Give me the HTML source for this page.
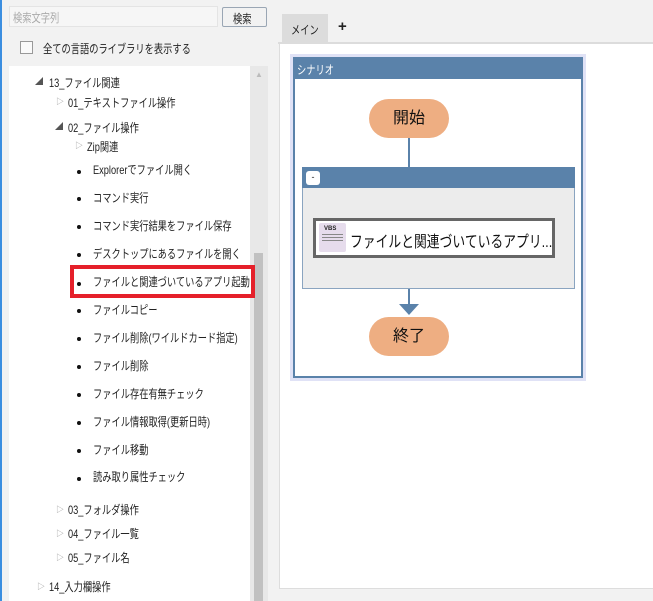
<!DOCTYPE html>
<html><head><meta charset="utf-8"><style>
*{margin:0;padding:0;box-sizing:border-box}
body{width:653px;height:601px;overflow:hidden;background:#f2f2f2;font-family:"Liberation Sans","Noto Sans CJK JP",sans-serif;font-size:12px;color:#222;position:relative}
.a{position:absolute;white-space:nowrap}
.t{transform:scaleX(.77);transform-origin:0 50%}
.tri{font-size:8px;color:#555}
.dot{position:absolute;width:4px;height:4px;border-radius:2px;background:#111}
.pill{position:absolute;width:80px;height:39px;border-radius:20px;background:#eeae82;font-size:16px;text-align:center;line-height:39px;color:#111}
</style></head><body>
<div class="a" style="left:0;top:0;width:2px;height:601px;background:#3b8ee0"></div>
<div class="a" style="top:6px;left:9px;width:209px;height:21px;background:#f6f6f6;border:1px solid #e4e4e4;color:#aaa;padding:2px 3px"><span class="a t" style="left:3px;top:2px">検索文字列</span></div>
<div class="a" style="left:222px;top:7px;width:45px;height:20px;background:#f2f2f2;border:1px solid #9aa6b4;border-radius:2px"><span class="a t" style="left:10px;top:2px">検索</span></div>
<div class="a" style="left:20px;top:41px;width:13px;height:13px;border:1px solid #999;background:#fafafa"></div>
<div class="a t" style="left:43px;top:40px">全ての言語のライブラリを表示する</div>
<div class="a" style="left:9px;top:66px;width:241px;height:535px;background:#fff"></div>

<div class="a tri" style="left:35px;top:76px">◢</div><div class="a t" style="left:49px;top:74px">13_ファイル関連</div>
<div class="a tri" style="left:56px;top:96px;color:#999">▷</div><div class="a t" style="left:68px;top:94px">01_テキストファイル操作</div>
<div class="a tri" style="left:55px;top:121px">◢</div><div class="a t" style="left:68px;top:119px">02_ファイル操作</div>
<div class="a tri" style="left:75px;top:140px;color:#999">▷</div><div class="a t" style="left:87px;top:138px">Zip関連</div>
<div class="dot" style="left:77px;top:170px"></div><div class="a t" style="left:93px;top:161px">Explorerでファイル開く</div>
<div class="dot" style="left:77px;top:197px"></div><div class="a t" style="left:93px;top:189px">コマンド実行</div>
<div class="dot" style="left:77px;top:225px"></div><div class="a t" style="left:93px;top:217px">コマンド実行結果をファイル保存</div>
<div class="dot" style="left:77px;top:253px"></div><div class="a t" style="left:93px;top:245px">デスクトップにあるファイルを開く</div>
<div class="dot" style="left:77px;top:309px"></div><div class="a t" style="left:93px;top:301px">ファイルコピー</div>
<div class="dot" style="left:77px;top:337px"></div><div class="a t" style="left:93px;top:329px">ファイル削除(ワイルドカード指定)</div>
<div class="dot" style="left:77px;top:365px"></div><div class="a t" style="left:93px;top:357px">ファイル削除</div>
<div class="dot" style="left:77px;top:393px"></div><div class="a t" style="left:93px;top:385px">ファイル存在有無チェック</div>
<div class="dot" style="left:77px;top:421px"></div><div class="a t" style="left:93px;top:413px">ファイル情報取得(更新日時)</div>
<div class="dot" style="left:77px;top:449px"></div><div class="a t" style="left:93px;top:441px">ファイル移動</div>
<div class="dot" style="left:77px;top:477px"></div><div class="a t" style="left:93px;top:468px">読み取り属性チェック</div>
<div class="a tri" style="left:56px;top:504px;color:#999">▷</div><div class="a t" style="left:68px;top:501px">03_フォルダ操作</div>
<div class="a tri" style="left:56px;top:528px;color:#999">▷</div><div class="a t" style="left:68px;top:525px">04_ファイル一覧</div>
<div class="a tri" style="left:56px;top:552px;color:#999">▷</div><div class="a t" style="left:68px;top:549px">05_ファイル名</div>
<div class="a tri" style="left:37px;top:581px;color:#999">▷</div><div class="a t" style="left:49px;top:578px">14_入力欄操作</div>

<div class="a" style="left:250px;top:66px;width:18px;height:535px;background:#e8e8e8"></div>
<div class="a" style="left:254px;top:253px;width:9px;height:348px;background:#c1c1c1"></div>
<div class="a tri" style="left:255px;top:70px;color:#bbb">▲</div>
<div class="a" style="left:70px;top:265px;width:185px;height:33px;border:4px solid #e5202a;overflow:hidden;background:#fff;z-index:2"><div class="dot" style="left:3px;top:13px"></div><div class="a t" style="left:19px;top:4px">ファイルと関連づいているアプリ起動</div></div>
<div class="a" style="left:268px;top:0;width:12px;height:601px;background:#f2f2f2"></div>

<div class="a" style="left:282px;top:14px;width:46px;height:28px;background:#dcdcdc"><span class="a t" style="left:9px;top:7px">メイン</span></div>
<div class="a" style="left:338px;top:18px;font-size:15px;font-weight:bold">+</div>
<div class="a" style="left:278px;top:42px;width:375px;height:2px;background:#dcdcdc"></div>
<div class="a" style="left:279px;top:44px;width:374px;height:545px;background:#fff;border-left:1px solid #ddd;border-bottom:1px solid #ddd"></div>

<div class="a" style="left:290px;top:54px;width:296px;height:327px;border:3px solid #e0e2f6"></div>
<div class="a" style="left:293px;top:57px;width:290px;height:321px;border:2px solid #5a82aa;background:#fff"></div>
<div class="a" style="left:293px;top:57px;width:290px;height:22px;background:#5a82aa;color:#fff"><span class="a t" style="left:4px;top:4px">シナリオ</span></div>
<div class="pill" style="left:369px;top:99px">開始</div>
<div class="a" style="left:408px;top:138px;width:2px;height:29px;background:#5a82aa"></div>
<div class="a" style="left:302px;top:167px;width:273px;height:122px;border:1px solid #8aa4c0;background:#ececec"></div>
<div class="a" style="left:302px;top:167px;width:273px;height:21px;background:#5a82aa"></div>
<div class="a" style="left:306px;top:171px;width:14px;height:14px;background:#fff;border-radius:3px;font-size:9px;text-align:center;line-height:12px">-</div>
<div class="a" style="left:313px;top:218px;width:242px;height:40px;border:3px solid #666;background:#fff;overflow:hidden"></div>
<div class="a" style="left:319px;top:223px;width:27px;height:29px;background:#e6dcec;border-radius:2px"><div style="font-size:6px;font-weight:bold;margin:3px 0 0 5px">VBS</div><div style="margin:2px 3px;height:1px;background:#888"></div><div style="margin:2px 3px;height:1px;background:#888"></div><div style="margin:2px 3px;height:1px;background:#888"></div></div>
<div class="a t" style="left:350px;top:228px;font-size:16px;transform:scaleX(.8);color:#111">ファイルと関連づいているアプリ...</div>
<div class="a" style="left:408px;top:289px;width:2px;height:16px;background:#5a82aa"></div>
<div class="a" style="left:399px;top:304px;width:0;height:0;border-left:10px solid transparent;border-right:10px solid transparent;border-top:11px solid #5a82aa"></div>
<div class="pill" style="left:369px;top:317px">終了</div>
</body></html>
